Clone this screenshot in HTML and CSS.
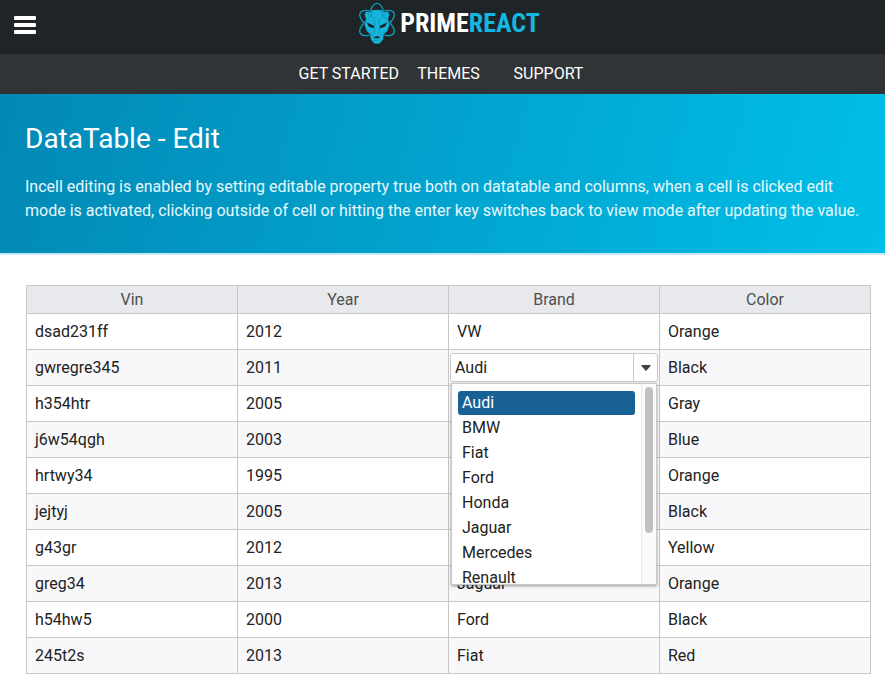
FILE: index.html
```html
<!DOCTYPE html>
<html lang="en">
<head>
    <meta charset="UTF-8">
    <meta name="viewport" content="width=device-width, initial-scale=1.0">
    <title>PrimeReact - DataTable Edit</title>
    <link rel="stylesheet" href="styles.css">
</head>
<body>
    <header class="topbar">
        <button type="button" class="menu-button" aria-label="Menu">
            <span></span>
            <span></span>
            <span></span>
        </button>
        <a href="#" class="logo">
            <svg class="logo-icon" viewBox="8 6 118 126" aria-hidden="true">
                <g fill="none" stroke="#0aa0c4" stroke-width="4">
                    <ellipse cx="67" cy="69" rx="25" ry="59"/>
                    <ellipse cx="67" cy="69" rx="25" ry="59" transform="rotate(58 67 69)"/>
                    <ellipse cx="67" cy="69" rx="25" ry="59" transform="rotate(122 67 69)"/>
                </g>
                <path fill="#14b4dc" stroke="#1f2427" stroke-width="2" d="M52 29h30l7 7 12-3 4 11-4 12 4 19-6 18-10 9-3 16-8 11-6 3H62l-6-3-8-11-3-16-10-9-6-18 4-19-4-12 4-11 12 3z"/>
                <path fill="#1f2427" d="M36 67l23 11-2 7-14-5zM98 67L75 78l2 7 14-5zM57 112l10-4 10 4-5 3H62z"/>
                <path fill="none" stroke="#087e9e" stroke-width="1.500" d="M53 31l-3 17 11 11-2 43M81 31l3 17-11 11 2 43M36 40l14 8-16 12M98 40l-14 8 16 12M45 95l12 15M89 95l-12 15M57 121h20"/>
            </svg>
            <span class="logo-text">PRIME<span class="logo-accent">REACT</span></span>
        </a>
    </header>

    <nav class="topmenu">
        <a href="#">GET STARTED</a>
        <a href="#">THEMES</a>
        <a href="#">SUPPORT</a>
    </nav>

    <section class="introduction">
        <h1>DataTable - Edit</h1>
        <p>Incell editing is enabled by setting editable property true both on datatable and columns, when a cell is clicked edit mode is activated, clicking outside of cell or hitting the enter key switches back to view mode after updating the value.</p>
    </section>

    <main class="implementation">
        <table class="datatable">
            <thead>
                <tr>
                    <th>Vin</th>
                    <th>Year</th>
                    <th>Brand</th>
                    <th>Color</th>
                </tr>
            </thead>
            <tbody>
                <tr><td>dsad231ff</td><td>2012</td><td>VW</td><td>Orange</td></tr>
                <tr>
                    <td>gwregre345</td>
                    <td>2011</td>
                    <td class="editing">
                        <div class="dropdown">
                            <select class="dropdown-select" aria-label="Brand">
                                <option selected>Audi</option>
                                <option>BMW</option>
                                <option>Fiat</option>
                                <option>Ford</option>
                                <option>Honda</option>
                                <option>Jaguar</option>
                                <option>Mercedes</option>
                                <option>Renault</option>
                            </select>
                            <span class="dropdown-trigger">
                                <svg width="10" height="6" viewBox="0 0 10 6" aria-hidden="true"><path fill="#444" d="M1 0h8q1 0 .5 1L5.600 5.500q-.6.500-1.200 0L.5 1Q0 0 1 0z"/></svg>
                            </span>
                            <div class="dropdown-panel">
                                <ul class="dropdown-items" role="listbox" aria-label="Brand">
                                    <li role="option" aria-selected="true" class="selected">Audi</li>
                                    <li role="option">BMW</li>
                                    <li role="option">Fiat</li>
                                    <li role="option">Ford</li>
                                    <li role="option">Honda</li>
                                    <li role="option">Jaguar</li>
                                    <li role="option">Mercedes</li>
                                    <li role="option">Renault</li>
                                </ul>
                                <div class="scrollbar"><div class="scrollbar-thumb"></div></div>
                            </div>
                        </div>
                    </td>
                    <td>Black</td>
                </tr>
                <tr><td>h354htr</td><td>2005</td><td></td><td>Gray</td></tr>
                <tr><td>j6w54qgh</td><td>2003</td><td></td><td>Blue</td></tr>
                <tr><td>hrtwy34</td><td>1995</td><td></td><td>Orange</td></tr>
                <tr><td>jejtyj</td><td>2005</td><td></td><td>Black</td></tr>
                <tr><td>g43gr</td><td>2012</td><td></td><td>Yellow</td></tr>
                <tr><td>greg34</td><td>2013</td><td>Jaguar</td><td>Orange</td></tr>
                <tr><td>h54hw5</td><td>2000</td><td>Ford</td><td>Black</td></tr>
                <tr><td>245t2s</td><td>2013</td><td>Fiat</td><td>Red</td></tr>
            </tbody>
        </table>
    </main>
</body>
</html>
```
FILE: styles.css
```css
* {
    box-sizing: border-box;
}

body {
    margin: 0;
    font-family: Roboto, "Liberation Sans", sans-serif;
    font-size: 16px;
    color: #222;
    background-color: #fff;
}

/* Top bar */
.topbar {
    display: grid;
    grid-template-columns: 1fr auto 1fr;
    align-items: start;
    height: 54px;
    padding: 0 14px;
    background-color: #1f2427;
}

.menu-button {
    display: flex;
    flex-direction: column;
    gap: 3px;
    width: 22px;
    margin-top: 16px;
    padding: 0;
    border: none;
    background: none;
    cursor: pointer;
}

.menu-button span {
    width: 22px;
    height: 4px;
    border-radius: 1px;
    background-color: #fff;
}

.logo {
    display: flex;
    align-items: center;
    gap: 3px;
    margin-top: 2px;
    margin-left: 12px;
    color: #fff;
    text-decoration: none;
}

.logo-icon {
    width: 40px;
    height: 42px;
}

.logo-text {
    font-family: "Roboto Condensed", "Liberation Sans Narrow", Roboto, sans-serif;
    font-size: 26px;
    font-weight: 700;
    line-height: 32px;
}

.logo-accent {
    color: #12b8e0;
}

.topmenu {
    display: flex;
    justify-content: center;
    height: 40px;
    padding-left: 12px;
    background-color: #313437;
}

.topmenu a {
    width: 100px;
    color: #fff;
    line-height: 40px;
    text-align: center;
    text-decoration: none;
    white-space: nowrap;
}

/* Introduction */
.introduction {
    padding: 28px 25px 30px;
    border-bottom: 2px solid #c8e8f6;
    color: #fff;
    background: linear-gradient(105deg, #0388b5 0%, #00bfe8 100%);
    background-clip: padding-box;
}

.introduction h1 {
    margin: 0 0 20px;
    font-size: 28px;
    font-weight: 400;
    line-height: 33px;
}

.introduction p {
    margin: 0;
    line-height: 24px;
    color: #e8f8fd;
}

/* DataTable */
.implementation {
    padding: 30px 14px 18px 26px;
}

.datatable {
    width: 100%;
    border-collapse: collapse;
    table-layout: fixed;
}

.datatable th,
.datatable td {
    border: 1px solid #c8c8c8;
    line-height: 19px;
}

.datatable th {
    height: 28px;
    padding: 4px 8px;
    font-weight: 400;
    color: #4f4f4f;
    background-color: #e8e9ed;
}

.datatable td {
    height: 36px;
    padding: 8px;
}

.datatable tbody tr:nth-child(even) {
    background-color: #f8f8fa;
}

.datatable td.editing {
    padding: 0 1px;
}

/* Dropdown */
.dropdown {
    position: relative;
    display: flex;
    height: 29px;
    border: 1px solid #c8c8c8;
    border-radius: 3px;
    background-color: #fff;
}

.dropdown-select {
    flex: 1;
    min-width: 0;
    padding: 0 4px;
    border: none;
    outline: none;
    appearance: none;
    font: inherit;
    color: #222;
    background: transparent;
}

.dropdown-trigger {
    display: flex;
    align-items: center;
    justify-content: center;
    width: 24px;
    border-left: 1px solid #c8c8c8;
    pointer-events: none;
}

.dropdown-panel {
    position: absolute;
    top: 29px;
    left: 0;
    right: 0;
    z-index: 10;
    display: flex;
    height: 202px;
    border: 1px solid #c8c8c8;
    overflow: hidden;
    background-color: #fff;
    box-shadow: 0 1px 3px rgba(0, 0, 0, 0.4);
}

.dropdown-items {
    flex: 1;
    margin: 0;
    padding: 7px 6px;
    list-style: none;
}

.dropdown-items li {
    height: 24px;
    margin-bottom: 1px;
    padding: 0 4px;
    border-radius: 3px;
    line-height: 24px;
}

.dropdown-items .selected {
    color: #fff;
    background-color: #186194;
}

.scrollbar {
    width: 15px;
    padding: 3px;
    border-left: 1px solid #e8e8e8;
    background-color: #fafafa;
}

.scrollbar-thumb {
    width: 8px;
    height: 146px;
    border-radius: 4px;
    background-color: #c1c1c1;
}
```
